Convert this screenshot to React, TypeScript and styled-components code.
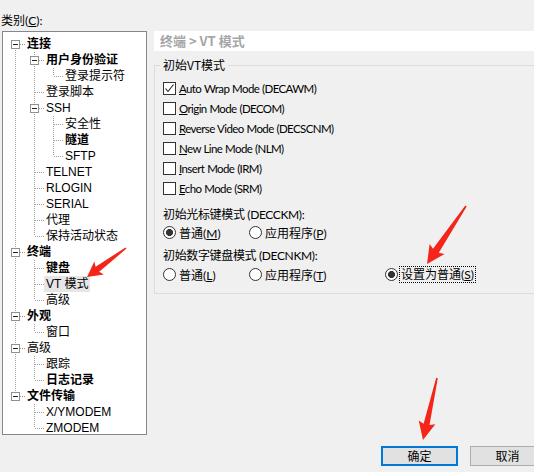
import React from 'react';
import styled, { createGlobalStyle } from 'styled-components';

const GlobalStyle = createGlobalStyle`
  html, body {
    margin: 0;
    padding: 0;
    background: #f0f0f0;
  }
  body {
    font-family: 'Lato', 'Noto Sans CJK SC', sans-serif;
    font-size: 12px;
    color: #000;
  }
`;

type TreeNode = {
  label: string;
  bold?: boolean;
  selected?: boolean;
  children?: TreeNode[];
};

type FlatRow = {
  node: TreeNode;
  level: number;
  isFirst: boolean;
  isLast: boolean;
  trail: boolean[];
};

const tree: TreeNode[] = [
  {
    label: '连接',
    bold: true,
    children: [
      { label: '用户身份验证', bold: true, children: [{ label: '登录提示符' }] },
      { label: '登录脚本' },
      {
        label: 'SSH',
        children: [{ label: '安全性' }, { label: '隧道', bold: true }, { label: 'SFTP' }],
      },
      { label: 'TELNET' },
      { label: 'RLOGIN' },
      { label: 'SERIAL' },
      { label: '代理' },
      { label: '保持活动状态' },
    ],
  },
  {
    label: '终端',
    bold: true,
    children: [
      { label: '键盘', bold: true },
      { label: 'VT 模式', selected: true },
      { label: '高级' },
    ],
  },
  { label: '外观', bold: true, children: [{ label: '窗口' }] },
  { label: '高级', children: [{ label: '跟踪' }, { label: '日志记录', bold: true }] },
  {
    label: '文件传输',
    bold: true,
    children: [{ label: 'X/YMODEM' }, { label: 'ZMODEM' }],
  },
];

const flatten = (nodes: TreeNode[], level = 0, trail: boolean[] = []): FlatRow[] =>
  nodes.flatMap((node, i) => {
    const isLast = i === nodes.length - 1;
    const row: FlatRow = { node, level, isFirst: level === 0 && i === 0, isLast, trail };
    const kids = node.children ? flatten(node.children, level + 1, [...trail, !isLast]) : [];
    return [row, ...kids];
  });

const lineColour = '#a0a0a0';

const PassLine = () => (
  <svg width={19} height={16}>
    <line x1={9.5} y1={0} x2={9.5} y2={16} stroke={lineColour} strokeDasharray="1 1" />
  </svg>
);

const EmptyCell = () => <svg width={19} height={16} />;

const OwnCell = ({ row }: { row: FlatRow }) => (
  <svg width={19} height={16}>
    {!row.isFirst && (
      <line x1={9.5} y1={0} x2={9.5} y2={8} stroke={lineColour} strokeDasharray="1 1" />
    )}
    {!row.isLast && (
      <line x1={9.5} y1={8} x2={9.5} y2={16} stroke={lineColour} strokeDasharray="1 1" />
    )}
    <line x1={10} y1={8.5} x2={19} y2={8.5} stroke={lineColour} strokeDasharray="1 1" />
    {row.node.children && (
      <>
        <rect x={5.5} y={4.5} width={8} height={8} fill="#fff" stroke="#919191" />
        <line x1={7} y1={8.5} x2={12} y2={8.5} stroke="#222" />
      </>
    )}
  </svg>
);

const TreeRow = ({ row }: { row: FlatRow }) => (
  <Row>
    {row.trail.map((cont, k) => (cont ? <PassLine key={k} /> : <EmptyCell key={k} />))}
    <OwnCell row={row} />
    <NodeLabel $bold={!!row.node.bold} $selected={!!row.node.selected}>
      {row.node.label}
    </NodeLabel>
  </Row>
);

type ArrowProps = {
  tail: [number, number];
  tip: [number, number];
  head: number;
  half: number;
  neck: number;
};

const arrowPoints = ({ tail, tip, head, half, neck }: ArrowProps) => {
  const [tx, ty] = tail;
  const [px, py] = tip;
  const len = Math.hypot(px - tx, py - ty);
  const ux = (px - tx) / len;
  const uy = (py - ty) / len;
  const nx = -uy;
  const ny = ux;
  const bx = px - ux * head;
  const by = py - uy * head;
  const cx = bx - ux * 2;
  const cy = by - uy * 2;
  const pts = [
    [tx + nx * 0.8, ty + ny * 0.8],
    [bx + nx * neck, by + ny * neck],
    [cx + nx * half, cy + ny * half],
    [px, py],
    [cx - nx * half, cy - ny * half],
    [bx - nx * neck, by - ny * neck],
    [tx - nx * 0.8, ty - ny * 0.8],
  ];
  return pts.map(([x, y]) => `${x.toFixed(1)},${y.toFixed(1)}`).join(' ');
};

const arrows: ArrowProps[] = [
  { tail: [126, 248], tip: [87, 277], head: 13, half: 8, neck: 3 },
  { tail: [466, 206], tip: [427, 264], head: 16, half: 9, neck: 3.5 },
  { tail: [437, 378], tip: [423, 440], head: 16, half: 8.5, neck: 3 },
];

const CheckBox = ({ checked }: { checked?: boolean }) => (
  <Box>
    {checked && (
      <svg width={11} height={11}>
        <polyline points="1.5,5.5 4,8.5 9.5,1.5" fill="none" stroke="#222" strokeWidth={1.1} />
      </svg>
    )}
  </Box>
);

const checkItems: { key: string; rest: string; checked?: boolean }[] = [
  { key: 'A', rest: 'uto Wrap Mode (DECAWM)', checked: true },
  { key: 'O', rest: 'rigin Mode (DECOM)' },
  { key: 'R', rest: 'everse Video Mode (DECSCNM)' },
  { key: 'N', rest: 'ew Line Mode (NLM)' },
  { key: 'I', rest: 'nsert Mode (IRM)' },
  { key: 'E', rest: 'cho Mode (SRM)' },
];

export default function App() {
  const rows = flatten(tree);

  return (
    <Window>
      <GlobalStyle />
      <CategoryLabel>
        类别(<Key>C</Key>):
      </CategoryLabel>
      <Main>
        <TreePanel>
          {rows.map((row, i) => (
            <TreeRow key={i} row={row} />
          ))}
        </TreePanel>
        <RightPanel>
          <Header>终端 &gt; VT 模式</Header>
          <GroupBox>
            <Legend>初始VT模式</Legend>
            <CheckList>
              {checkItems.map((item) => (
                <CheckRow key={item.key}>
                  <CheckBox checked={item.checked} />
                  <CheckText>
                    <Key>{item.key}</Key>
                    {item.rest}
                  </CheckText>
                </CheckRow>
              ))}
            </CheckList>
            <SectionLabel $gap={9}>初始光标键模式 (DECCKM):</SectionLabel>
            <RadioRow $gap={0}>
              <RadioItem>
                <Radio $checked />
                <span>
                  普通(<Key>M</Key>)
                </span>
              </RadioItem>
              <RadioItem>
                <Radio />
                <span>
                  应用程序(<Key>P</Key>)
                </span>
              </RadioItem>
            </RadioRow>
            <SectionLabel $gap={7}>初始数字键盘模式 (DECNKM):</SectionLabel>
            <RadioRow $gap={1}>
              <RadioItem>
                <Radio />
                <span>
                  普通(<Key>L</Key>)
                </span>
              </RadioItem>
              <RadioItem>
                <Radio />
                <span>
                  应用程序(<Key>T</Key>)
                </span>
              </RadioItem>
              <RadioItem $tight>
                <Radio $checked />
                <Focused>
                  设置为普通(<Key>S</Key>)
                </Focused>
              </RadioItem>
            </RadioRow>
          </GroupBox>
        </RightPanel>
      </Main>
      <ButtonRow>
        <Button $default>确定</Button>
        <Button>取消</Button>
      </ButtonRow>
      <Annotations width={534} height={472}>
        {arrows.map((a, i) => (
          <polygon key={i} points={arrowPoints(a)} fill="#f4261b" />
        ))}
      </Annotations>
    </Window>
  );
}

const Window = styled.div`
  position: relative;
  width: 534px;
  height: 472px;
  overflow: hidden;
  background: #f0f0f0;
  padding-top: 13px;
  box-sizing: border-box;
`;

const Key = styled.u`
  text-decoration: underline;
  text-underline-offset: 1px;
`;

const CategoryLabel = styled.div`
  padding-left: 1px;
  line-height: 16px;
  height: 16px;
`;

const Main = styled.div`
  display: flex;
  margin-top: 2px;
  padding-left: 2px;
`;

const TreePanel = styled.div`
  flex: none;
  width: 145px;
  height: 404px;
  box-sizing: border-box;
  border: 1px solid #828790;
  background: #fff;
  padding: 4px 0 0 3px;
  overflow: hidden;
  font-family: 'Liberation Sans', 'Noto Sans CJK SC', sans-serif;
`;

const Row = styled.div`
  display: flex;
  height: 16px;
  align-items: center;

  svg {
    flex: none;
    display: block;
  }
`;

const NodeLabel = styled.span<{ $bold: boolean; $selected: boolean }>`
  padding: 0 2px;
  line-height: 16px;
  height: 16px;
  white-space: nowrap;
  font-weight: ${(p) => (p.$bold ? 700 : 400)};
  background: ${(p) => (p.$selected ? '#e6e6e6' : 'transparent')};
`;

const RightPanel = styled.div`
  flex: none;
  width: 400px;
  margin-left: 7px;
`;

const Header = styled.div`
  height: 20px;
  line-height: 20px;
  background: #fff;
  padding-left: 6px;
  font-family: 'Noto Sans CJK SC', sans-serif;
  font-size: 13px;
  font-weight: 700;
  color: #a6a6a6;
`;

const GroupBox = styled.fieldset`
  margin: 6px 0 0 0;
  padding: 0 0 0 8px;
  height: 237px;
  box-sizing: border-box;
  border: 1px solid #dcdcdc;
  min-width: 0;
`;

const Legend = styled.legend`
  margin-left: -3px;
  padding: 0 3px;
  line-height: 16px;
  font-family: 'Noto Sans CJK SC', sans-serif;
`;

const CheckList = styled.div`
  margin-top: 5px;
  display: flex;
  flex-direction: column;
`;

const CheckRow = styled.div`
  display: flex;
  align-items: center;
  gap: 3px;
  height: 20px;
  white-space: nowrap;
`;

const CheckText = styled.span`
  font-size: 11.5px;
  letter-spacing: -0.6px;
  word-spacing: 0.5px;
`;

const Box = styled.span`
  flex: none;
  width: 13px;
  height: 13px;
  box-sizing: border-box;
  border: 1px solid #333;
  background: #fff;
  display: flex;
  align-items: center;
  justify-content: center;
`;

const SectionLabel = styled.div<{ $gap: number }>`
  margin-top: ${(p) => p.$gap}px;
  line-height: 16px;
  height: 16px;
  white-space: nowrap;
  letter-spacing: -0.35px;
`;

const RadioRow = styled.div<{ $gap: number }>`
  margin-top: ${(p) => p.$gap}px;
  display: grid;
  grid-template-columns: 86px 136px auto;
  height: 18px;
  align-items: center;
`;

const RadioItem = styled.div<{ $tight?: boolean }>`
  display: flex;
  align-items: center;
  gap: ${(p) => (p.$tight ? 2 : 3)}px;
  white-space: nowrap;
`;

const Radio = styled.span<{ $checked?: boolean }>`
  flex: none;
  width: 13px;
  height: 13px;
  box-sizing: border-box;
  border: 1px solid #333;
  border-radius: 50%;
  background: ${(p) =>
    p.$checked ? 'radial-gradient(circle, #333 0 3.2px, #fff 3.8px)' : '#fff'};
`;

const Focused = styled.span`
  outline: 1px dotted #000;
  outline-offset: 0;
  padding: 0 1px;
  line-height: 15px;
`;

const ButtonRow = styled.div`
  display: flex;
  gap: 12px;
  margin-top: 11px;
  padding-left: 381px;
`;

const Button = styled.button<{ $default?: boolean }>`
  flex: none;
  width: ${(p) => (p.$default ? 77 : 75)}px;
  height: 20px;
  box-sizing: border-box;
  padding: 0;
  background: #e1e1e1;
  border: ${(p) => (p.$default ? '2px solid #0078d7' : '1px solid #adadad')};
  font-family: 'Noto Sans CJK SC', sans-serif;
  font-size: 12px;
  color: #000;
  line-height: 16px;
`;

const Annotations = styled.svg`
  position: absolute;
  left: 0;
  top: 0;
  pointer-events: none;
`;
